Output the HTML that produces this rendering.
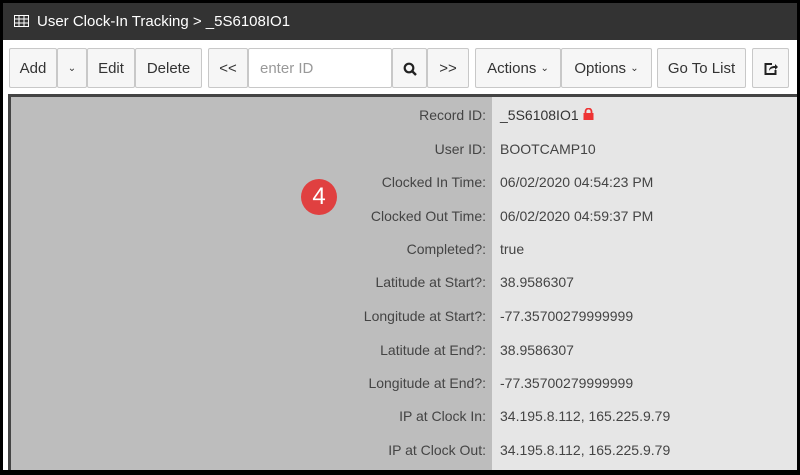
<!DOCTYPE html>
<html><head><style>
*{margin:0;padding:0;box-sizing:border-box}
body{width:800px;height:473px;background:#000;position:relative;overflow:hidden;font-family:"Liberation Sans",sans-serif}
#frame{position:absolute;left:3px;top:3px;width:794px;height:467px;background:#fff}
#title{position:absolute;left:0;top:0;width:794px;height:37px;background:#333;color:#fff;font-size:15px;line-height:37px;padding-left:34px}
#title svg{position:absolute;left:11px;top:12px}
.b{position:absolute;top:45px;height:40px;border:1px solid #c8c8c8;background:#f6f6f6;color:#333;font-size:15px;line-height:40px;text-align:center;border-radius:2px;white-space:nowrap}
.c{font-size:10px;position:relative;top:-2px}
#content{position:absolute;left:5px;top:91px;width:789px;height:376px;border:3px solid #444;border-bottom:none;border-right:none;background:#bdbdbd}
#right{position:absolute;left:481px;top:0;right:0;bottom:0;background:#e6e6e6}
#rows{position:absolute;left:0;top:2px;width:800px;height:473px}
.r{position:absolute;font-size:14px;color:#444;height:20px;line-height:20px;white-space:nowrap}
.l{left:186px;text-align:right;width:300px}
.v{left:500px}
</style></head><body>
<div id="frame">
<div id="title"><svg width="15" height="12" viewBox="0 0 15 12"><rect x="0.5" y="0.5" width="14" height="11" fill="none" stroke="#fff"/><path d="M0 4h15M0 8h15M5 0v12M10 0v12" stroke="#fff"/></svg>User Clock-In Tracking &gt; _5S6108IO1</div>
<div class="b" style="left:6px;width:48px">Add</div>
<div class="b" style="left:54px;width:30px"><span class="c">&#8964;</span></div>
<div class="b" style="left:84px;width:48px">Edit</div>
<div class="b" style="left:132px;width:67px">Delete</div>
<div class="b" style="left:205px;width:40px">&lt;&lt;</div>
<div class="b" style="left:245px;width:144px;background:#fff;text-align:left;padding-left:11px;color:#999">enter ID</div>
<div class="b" style="left:389px;width:35px"><svg width="14" height="14" viewBox="0 0 14 14" style="margin-top:13px"><circle cx="6" cy="6" r="4.3" fill="none" stroke="#222" stroke-width="2.2"/><path d="M9 9l4 4" stroke="#222" stroke-width="2.4"/></svg></div>
<div class="b" style="left:424px;width:42px">&gt;&gt;</div>
<div class="b" style="left:472px;width:86px">Actions <span class="c">&#8964;</span></div>
<div class="b" style="left:558px;width:91px">Options <span class="c">&#8964;</span></div>
<div class="b" style="left:654px;width:89px">Go To List</div>
<div class="b" style="left:749px;width:37px"><svg width="14" height="13" viewBox="0 0 14 13" style="margin-top:13px"><path d="M8 2H1.5v10h10V8" fill="none" stroke="#222" stroke-width="2"/><path d="M5 9c0-4 3-5 6-5V2l3 3-3 3V6c-3 0-5 1-6 3z" fill="#222"/></svg></div>
<div id="content"><div id="right"></div>
<div style="position:absolute;left:290px;top:82px;width:36px;height:36px;border-radius:50%;background:#e04040;color:#fff;font-size:24px;text-align:center;line-height:36px">4</div>
</div>
</div>
<div id="rows">
<div class="r l" style="top:103px">Record ID:</div><div class="r v" style="top:103px;color:#333">_5S6108IO1 <svg width="11" height="12" viewBox="0 0 11 12"><path d="M2.5 5V3.5a3 3 0 0 1 6 0V5" fill="none" stroke="#e33" stroke-width="1.8"/><rect x="0.5" y="5" width="10" height="7" fill="#e33"/></svg></div>
<div class="r l" style="top:137px">User ID:</div><div class="r v" style="top:137px">BOOTCAMP10</div>
<div class="r l" style="top:170px">Clocked In Time:</div><div class="r v" style="top:170px">06/02/2020 04:54:23 PM</div>
<div class="r l" style="top:204px">Clocked Out Time:</div><div class="r v" style="top:204px">06/02/2020 04:59:37 PM</div>
<div class="r l" style="top:237px">Completed?:</div><div class="r v" style="top:237px">true</div>
<div class="r l" style="top:270px">Latitude at Start?:</div><div class="r v" style="top:270px">38.9586307</div>
<div class="r l" style="top:304px">Longitude at Start?:</div><div class="r v" style="top:304px">-77.35700279999999</div>
<div class="r l" style="top:338px">Latitude at End?:</div><div class="r v" style="top:338px">38.9586307</div>
<div class="r l" style="top:371px">Longitude at End?:</div><div class="r v" style="top:371px">-77.35700279999999</div>
<div class="r l" style="top:404px">IP at Clock In:</div><div class="r v" style="top:404px">34.195.8.112, 165.225.9.79</div>
<div class="r l" style="top:438px">IP at Clock Out:</div><div class="r v" style="top:438px">34.195.8.112, 165.225.9.79</div>
</div>
</body></html>
